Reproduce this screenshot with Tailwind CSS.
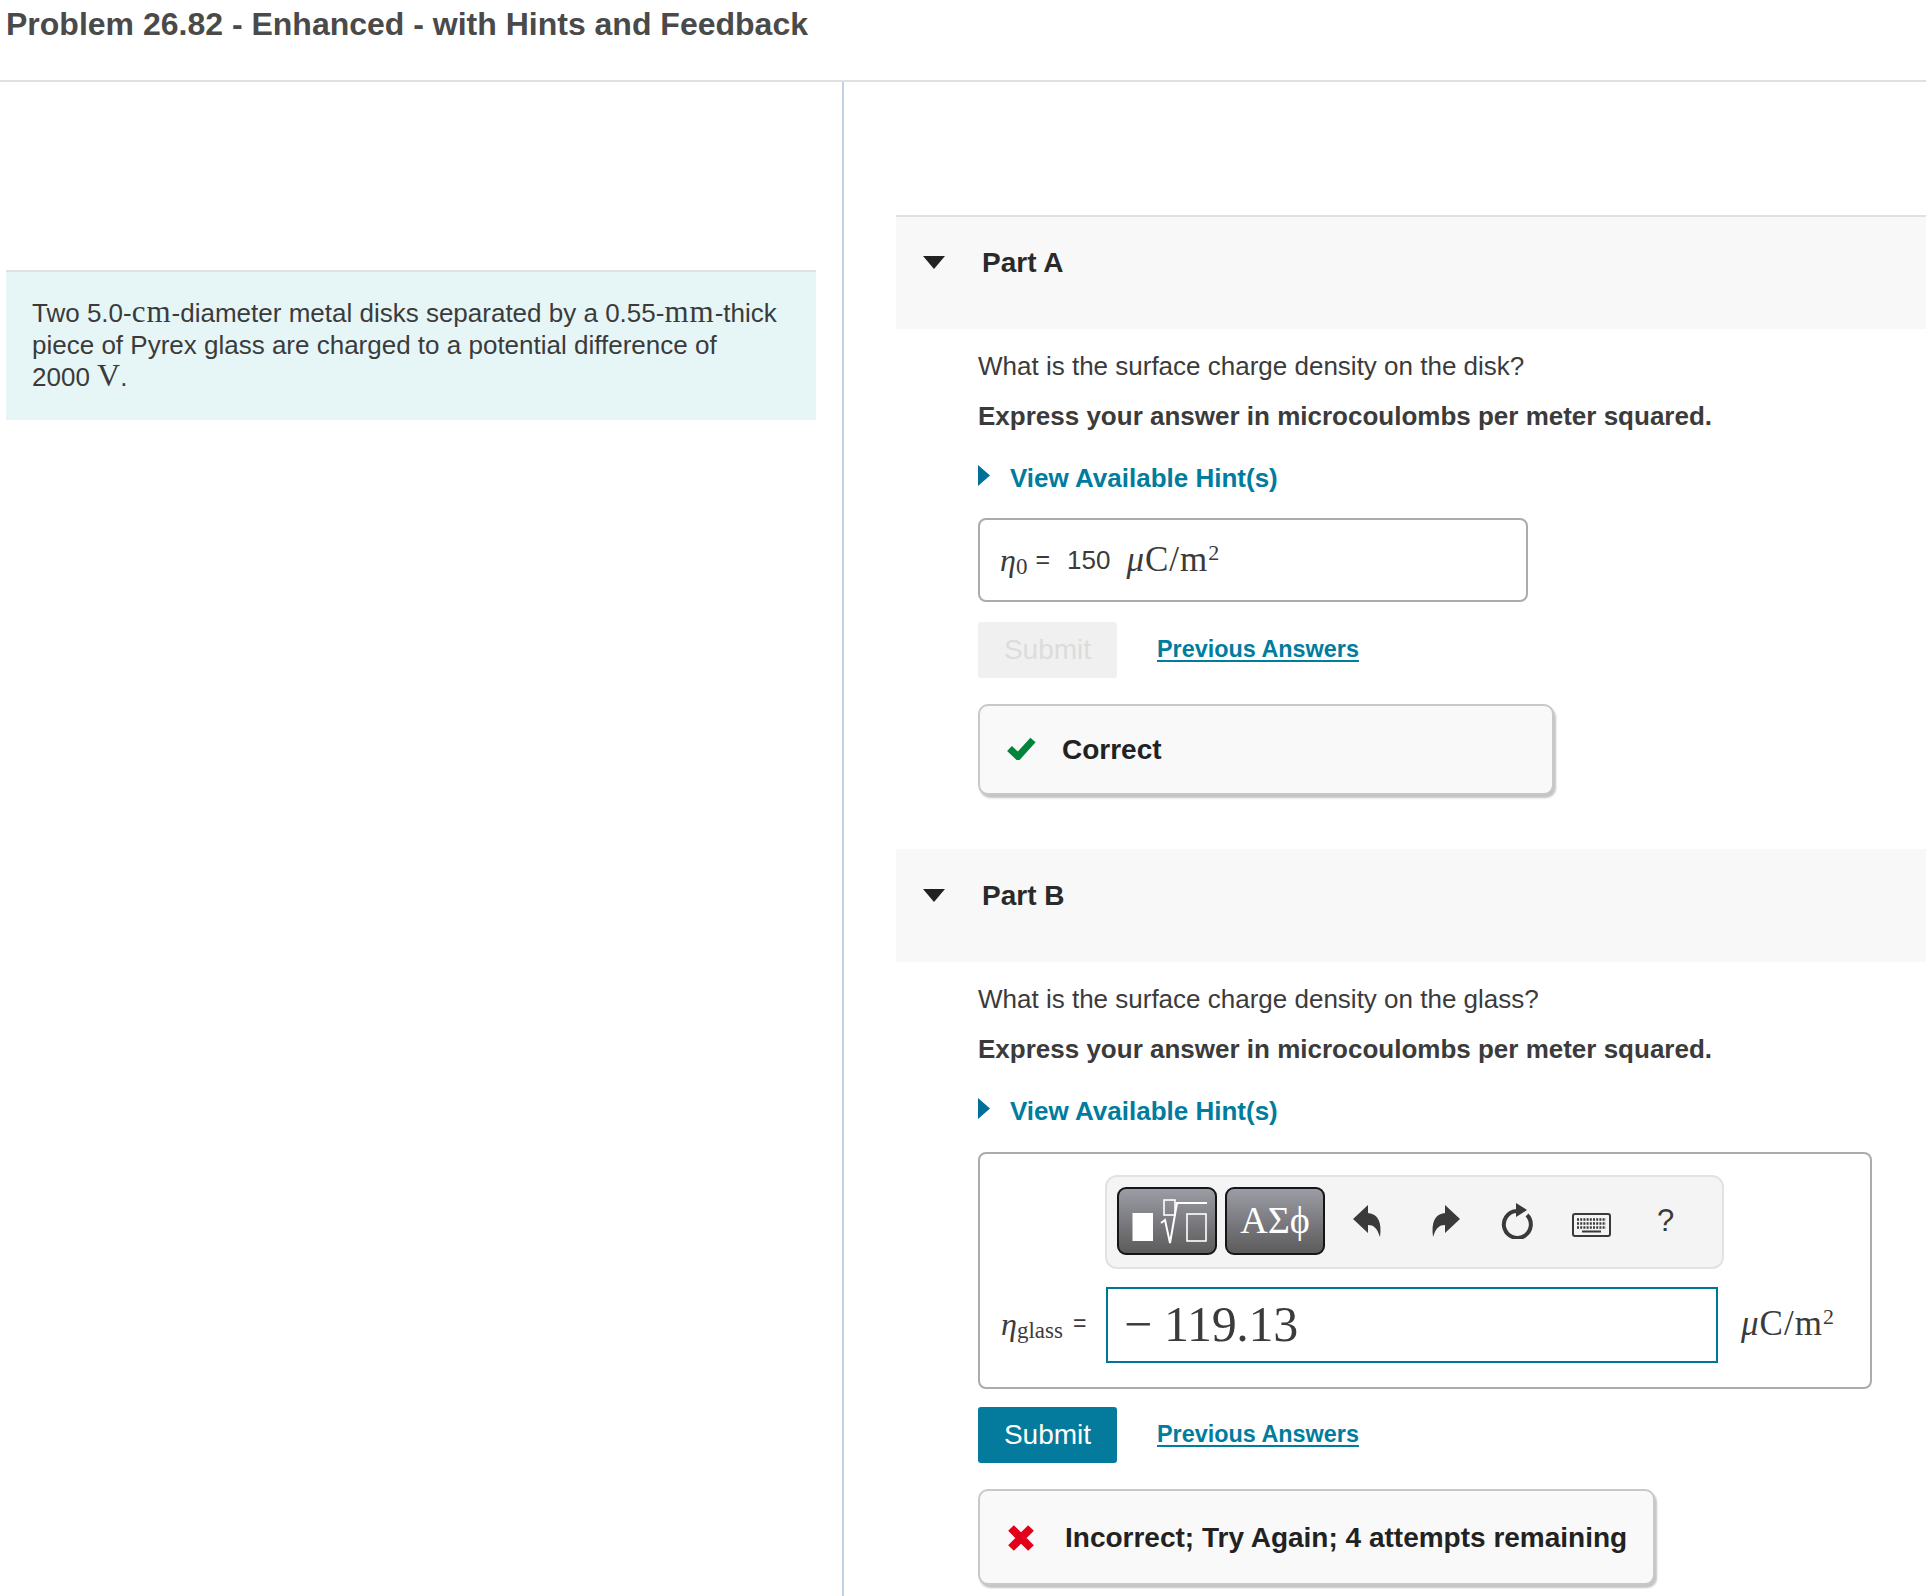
<!DOCTYPE html>
<html lang="en">
  <head>
    <meta charset="UTF-8" />
    <title>Problem 26.82</title>
    <script src="https://cdn.jsdelivr.net/npm/@tailwindcss/browser@4"></script>
  </head>
  <body class="h-[1596px] overflow-hidden bg-white font-['Liberation_Sans',sans-serif] text-[#3b3b3b]">
    <header class="h-[82px] border-b-2 border-[#e0e0e0] pl-[6px] pt-[7px]">
      <h1 class="text-[32px] leading-[34px] font-bold text-[#4a4a4a]">Problem 26.82 - Enhanced - with Hints and Feedback</h1>
    </header>

    <div class="flex h-[1514px]">
      <!-- left column -->
      <div class="w-[844px] shrink-0 border-r-2 border-[#c2d2e2] pl-[6px] pt-[188px]">
        <div class="h-[150px] w-[810px] border-t-2 border-[#dde2e2] bg-[#e6f6f7] pl-[26px] pt-[25px] text-[26px] leading-[32px]">
          Two 5.0-<span class="font-['Liberation_Serif',serif] text-[31px] leading-[20px] tracking-[1px]">cm</span>-diameter metal disks separated by a 0.55-<span class="font-['Liberation_Serif',serif] text-[31px] leading-[20px] tracking-[1px]">mm</span>-thick<br />
          piece of Pyrex glass are charged to a potential difference of<br />
          2000 <span class="font-['Liberation_Serif',serif] text-[32px] leading-[20px]">V</span>.
        </div>
      </div>

      <!-- right column -->
      <div class="flex-1 pl-[52px] pt-[133px]">
        <!-- part A -->
        <div class="flex h-[114px] border-t-2 border-[#e0e0e0] bg-[#f8f8f8] pl-[27px] pt-[30px]">
          <svg class="mt-[9px] h-[13px] w-[22px]" viewBox="0 0 22 13"><path d="M0 0H22L11 13Z" fill="#222" /></svg>
          <h2 class="ml-[37px] text-[28px] leading-[32px] font-bold text-[#2a2a2a]">Part A</h2>
        </div>
        <div class="pl-[82px]">
          <p class="mt-[21px] text-[26px] leading-[32px]">What is the surface charge density on the disk?</p>
          <p class="mt-[18px] text-[26px] leading-[32px] font-bold">Express your answer in microcoulombs per meter squared.</p>
          <div class="mt-[30px] flex items-start text-[#007c9e]">
            <svg class="mt-[3px] h-[21px] w-[12px]" viewBox="0 0 12 21"><path d="M0 0L12 10.5L0 21Z" fill="#00709a" /></svg>
            <span class="ml-[20px] text-[26px] leading-[32px] font-bold">View Available Hint(s)</span>
          </div>
          <div class="mt-[24px] flex h-[84px] w-[550px] items-center rounded-lg border-2 border-[#ababab] pl-[20px] text-[25px]">
            <span class="font-['Liberation_Serif',serif] text-[32px] italic">η<sub class="bottom-[-3px] text-[23px] not-italic">0</sub></span>
            <span class="ml-[8px]">=</span>
            <span class="ml-[17px] text-[26px]">150</span>
            <span class="ml-[16px] font-['Liberation_Serif',serif] text-[35px] tracking-[1px]"><i>μ</i>C/m<sup class="text-[22px]">2</sup></span>
          </div>
          <div class="mt-[20px] flex items-center">
            <button class="h-[56px] w-[139px] rounded-[3px] bg-[#f0f0f0] text-[28px] text-[#dcdcdc]">Submit</button>
            <a class="ml-[40px] text-[23.4px] font-bold text-[#007c9e] underline underline-offset-3" href="#">Previous Answers</a>
          </div>
          <div class="mt-[26px] flex h-[91px] w-[576px] items-center rounded-[10px] border-2 border-[#c8c8c8] bg-[#f9f9f9] pl-[27px] shadow-[2px_3px_2px_#c4c4c4]">
            <svg class="mb-[3px] h-[23px] w-[29px]" viewBox="0 0 29 23"><path d="M2.5 11.5L11 19.5L26 3" fill="none" stroke="#03843c" stroke-width="7" /></svg>
            <span class="ml-[26px] text-[28px] font-bold text-[#222]">Correct</span>
          </div>
        </div>

        <!-- part B -->
        <div class="mt-[54px] flex h-[113px] bg-[#f8f8f8] pl-[27px] pt-[31px]">
          <svg class="mt-[9px] h-[13px] w-[22px]" viewBox="0 0 22 13"><path d="M0 0H22L11 13Z" fill="#222" /></svg>
          <h2 class="ml-[37px] text-[28px] leading-[32px] font-bold text-[#2a2a2a]">Part B</h2>
        </div>
        <div class="pl-[82px]">
          <p class="mt-[21px] text-[26px] leading-[32px]">What is the surface charge density on the glass?</p>
          <p class="mt-[18px] text-[26px] leading-[32px] font-bold">Express your answer in microcoulombs per meter squared.</p>
          <div class="mt-[30px] flex items-start text-[#007c9e]">
            <svg class="mt-[3px] h-[21px] w-[12px]" viewBox="0 0 12 21"><path d="M0 0L12 10.5L0 21Z" fill="#00709a" /></svg>
            <span class="ml-[20px] text-[26px] leading-[32px] font-bold">View Available Hint(s)</span>
          </div>

          <div class="mt-[25px] h-[237px] w-[894px] rounded-lg border-2 border-[#ababab] pt-[21px]">
            <div class="ml-[125px] flex h-[94px] w-[619px] items-center rounded-[12px] border-2 border-[#e2e2e2] bg-[#f4f4f4] pb-[2px] pl-[10px]">
              <button class="h-[68px] w-[100px] rounded-[9px] border-2 border-[#151515] bg-linear-to-b from-[#9c9ca6] to-[#5c5c5c]">
                <svg class="h-[64px] w-[96px]" viewBox="0 0 96 64">
                  <rect x="13.5" y="24" width="20.5" height="28" fill="#fff" />
                  <rect x="45" y="11" width="11" height="15" fill="none" stroke="#fff" stroke-width="1.6" />
                  <path d="M42 34L46 31L51 54L58 14H88" fill="none" stroke="#fff" stroke-width="2" />
                  <rect x="68" y="25" width="19" height="27" fill="none" stroke="#fff" stroke-width="1.6" />
                </svg>
              </button>
              <button class="ml-[8px] h-[68px] w-[100px] rounded-[9px] border-2 border-[#151515] bg-linear-to-b from-[#9c9ca6] to-[#5c5c5c] pb-[3px] font-['Liberation_Serif',serif] text-[38px] leading-none text-white">ΑΣϕ</button>
              <svg class="ml-[28px] h-[32px] w-[29px]" viewBox="0 0 29 32"><path d="M0 14L15 0V8C25 9 29 17 27 32C24 23 21 20 15 20V28Z" fill="#3a3a3a" /></svg>
              <svg class="ml-[49px] h-[32px] w-[29px]" viewBox="0 0 29 32"><path d="M29 14L14 0V8C4 9 0 17 2 32C5 23 8 20 14 20V28Z" fill="#3a3a3a" /></svg>
              <svg class="ml-[41px] h-[36px] w-[32px]" viewBox="0 0 32 36">
                <path d="M26 12A13.5 13.5 0 1 1 15 8" fill="none" stroke="#3a3a3a" stroke-width="4" />
                <path d="M15 0L26 7L15 14Z" fill="#3a3a3a" />
              </svg>
              <svg class="ml-[39px] mt-[8px] h-[24px] w-[39px]" viewBox="0 0 39 24">
                <rect x="1" y="1" width="37" height="22" rx="2" fill="none" stroke="#3a3a3a" stroke-width="2" />
                <path d="M5 6.5H34M5 10.5H34" stroke="#3a3a3a" stroke-width="2.5" stroke-dasharray="2 1.2" />
                <path d="M5 14.5H34" stroke="#3a3a3a" stroke-width="2.5" stroke-dasharray="2 1.2" />
                <path d="M10 18.5H29" stroke="#3a3a3a" stroke-width="2" />
              </svg>
              <span class="ml-[46px] text-[31px] text-[#3a3a3a]">?</span>
            </div>
            <div class="mt-[18px] flex items-center">
              <span class="mb-[3px] ml-[21px] w-[60px] font-['Liberation_Serif',serif] text-[32px] whitespace-nowrap italic">η<sub class="bottom-[-3px] text-[23px] not-italic">glass</sub></span>
              <span class="mb-[3px] ml-[12px] w-[17px] text-[23px]">=</span>
              <div class="ml-[16px] flex h-[76px] w-[612px] items-center border-2 border-[#00759a] pb-[2px] pl-[16px] font-['Liberation_Serif',serif] text-[50px] tracking-[-0.3px] text-[#3b3b3b]">− 119.13</div>
              <span class="mb-[2px] ml-[23px] font-['Liberation_Serif',serif] text-[35px] tracking-[1px] whitespace-nowrap"><i>μ</i>C/m<sup class="text-[22px]">2</sup></span>
            </div>
          </div>

          <div class="mt-[18px] flex items-center">
            <button class="h-[56px] w-[139px] rounded-[3px] bg-[#047a9c] text-[28px] text-white">Submit</button>
            <a class="ml-[40px] text-[23.4px] font-bold text-[#007c9e] underline underline-offset-3" href="#">Previous Answers</a>
          </div>
          <div class="mt-[26px] flex h-[96px] w-[677px] items-center rounded-[10px] border-2 border-[#c8c8c8] bg-[#f9f9f9] pl-[27px] shadow-[2px_3px_2px_#c4c4c4]">
            <svg class="mt-[1px] h-[26px] w-[28px]" viewBox="0 0 28 26"><path d="M4 3L24 23M24 3L4 23" fill="none" stroke="#e2001a" stroke-width="8" /></svg>
            <span class="ml-[30px] pt-[2px] text-[28px] font-bold text-[#222]">Incorrect; Try Again; 4 attempts remaining</span>
          </div>
        </div>
      </div>
    </div>
  </body>
</html>
